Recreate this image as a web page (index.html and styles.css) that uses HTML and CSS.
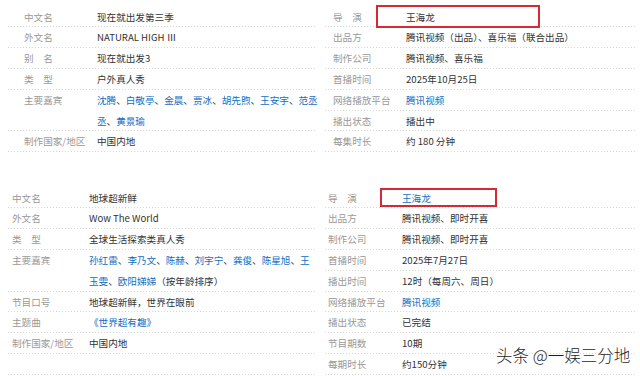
FILE: index.html
```html
<!DOCTYPE html>
<html lang="zh">
<head>
<meta charset="utf-8">
<link rel="stylesheet" href="styles.css">
</head>
<body>
<div class="page">
  <section class="info info-a">
    <div class="col col-left">
      <div class="row"><span class="lbl">中文名</span><span class="val">现在就出发第三季</span></div>
      <div class="row"><span class="lbl">外文名</span><span class="val">NATURAL HIGH Ⅲ</span></div>
      <div class="row"><span class="lbl">别&emsp;名</span><span class="val">现在就出发3</span></div>
      <div class="row"><span class="lbl">类&emsp;型</span><span class="val">户外真人秀</span></div>
      <div class="row"><span class="lbl">主要嘉宾</span><span class="val"><span class="lnk">沈腾</span>、<span class="lnk">白敬亭</span>、<span class="lnk">金晨</span>、<span class="lnk">贾冰</span>、<span class="lnk">胡先煦</span>、<span class="lnk">王安宇</span>、<span class="lnk">范丞</span><br><span class="lnk">丞</span>、<span class="lnk">黄景瑜</span></span></div>
      <div class="row"><span class="lbl">制作国家/地区</span><span class="val">中国内地</span></div>
    </div>
    <div class="col col-right">
      <div class="row"><span class="lbl">导&emsp;演</span><span class="val boxed">王海龙</span></div>
      <div class="row"><span class="lbl">出品方</span><span class="val">腾讯视频（出品）、喜乐福（联合出品）</span></div>
      <div class="row"><span class="lbl">制作公司</span><span class="val">腾讯视频、喜乐福</span></div>
      <div class="row"><span class="lbl">首播时间</span><span class="val">2025年10月25日</span></div>
      <div class="row"><span class="lbl">网络播放平台</span><span class="val lnk">腾讯视频</span></div>
      <div class="row"><span class="lbl">播出状态</span><span class="val">播出中</span></div>
      <div class="row"><span class="lbl">每集时长</span><span class="val">约 180 分钟</span></div>
    </div>
  </section>

  <section class="info info-b">
    <div class="col col-left">
      <div class="row"><span class="lbl">中文名</span><span class="val">地球超新鲜</span></div>
      <div class="row"><span class="lbl">外文名</span><span class="val">Wow The World</span></div>
      <div class="row"><span class="lbl">类&emsp;型</span><span class="val">全球生活探索类真人秀</span></div>
      <div class="row"><span class="lbl">主要嘉宾</span><span class="val"><span class="lnk">孙红雷</span>、<span class="lnk">李乃文</span>、<span class="lnk">陈赫</span>、<span class="lnk">刘宇宁</span>、<span class="lnk">龚俊</span>、<span class="lnk">陈星旭</span>、<span class="lnk">王</span><br><span class="lnk">玉雯</span>、<span class="lnk">欧阳娣娣</span>（按年龄排序）</span></div>
      <div class="row"><span class="lbl">节目口号</span><span class="val">地球超新鲜，世界在眼前</span></div>
      <div class="row"><span class="lbl">主题曲</span><span class="val"><span class="lnk">《世界超有趣》</span></span></div>
      <div class="row"><span class="lbl">制作国家/地区</span><span class="val">中国内地</span></div>
      <div class="row"><span class="lbl"></span><span class="val"></span></div>
    </div>
    <div class="col col-right">
      <div class="row"><span class="lbl">导&emsp;演</span><span class="val boxed boxed-b lnk">王海龙</span></div>
      <div class="row"><span class="lbl">出品方</span><span class="val">腾讯视频、即时开喜</span></div>
      <div class="row"><span class="lbl">制作公司</span><span class="val">腾讯视频、即时开喜</span></div>
      <div class="row"><span class="lbl">首播时间</span><span class="val">2025年7月27日</span></div>
      <div class="row"><span class="lbl">播出时间</span><span class="val">12时（每周六、周日）</span></div>
      <div class="row"><span class="lbl">网络播放平台</span><span class="val lnk">腾讯视频</span></div>
      <div class="row"><span class="lbl">播出状态</span><span class="val">已完结</span></div>
      <div class="row"><span class="lbl">节目期数</span><span class="val">10期</span></div>
      <div class="row"><span class="lbl">每期时长</span><span class="val">约150分钟</span></div>
    </div>
  </section>

  <div class="mark">头条 @一娱三分地</div>
</div>
</body>
</html>
```

FILE: styles.css
```css
html, body {
  margin: 0;
  padding: 0;
  background: #fff;
}

.page {
  position: relative;
  width: 640px;
  height: 376px;
  overflow: hidden;
  font-family: "Noto Sans CJK SC", "Microsoft YaHei", sans-serif;
  font-size: 9.6px;
  color: #333;
}

.info {
  display: flex;
  gap: 9px;
  padding-left: 8px;
}

.info-a {
  padding-top: 6.6px;
}

.info-b {
  margin-top: 35.4px;
}

.col-left {
  width: 308px;
}

.col-right {
  width: 310px;
}

.row {
  display: flex;
  line-height: 20.8px;
  white-space: nowrap;
  background-image: linear-gradient(to right, #d6d6d6 50%, rgba(255, 255, 255, 0) 50%);
  background-size: 3px 1px;
  background-repeat: repeat-x;
  background-position: left bottom;
}

.lbl {
  flex: none;
  color: #999;
}

.val {
  position: relative;
  min-height: 20.8px;
}

.info-a .col-left .lbl { padding-left: 16px; width: 73px; }
.info-a .col-right .lbl { padding-left: 8px; width: 73px; }
.info-b .col-left .lbl { padding-left: 4px; width: 77px; }
.info-b .col-right .lbl { padding-left: 3px; width: 74px; }

.lnk {
  color: #136ec2;
}

.boxed::after {
  content: "";
  position: absolute;
  left: -30px;
  top: -1.6px;
  width: 164px;
  height: 23px;
  border: 2px solid #d42a35;
  box-sizing: border-box;
}

.boxed-b::after {
  left: -22px;
  top: 0.4px;
  width: 117px;
  height: 19px;
}

.mark {
  position: absolute;
  left: 496px;
  top: 343px;
  font-family: "Noto Sans CJK SC", sans-serif;
  font-size: 16.5px;
  font-weight: 300;
  line-height: 24px;
  color: #1e1e1e;
  text-shadow: 0 0 2px #fff, 0 0 2px #fff;
}
```
